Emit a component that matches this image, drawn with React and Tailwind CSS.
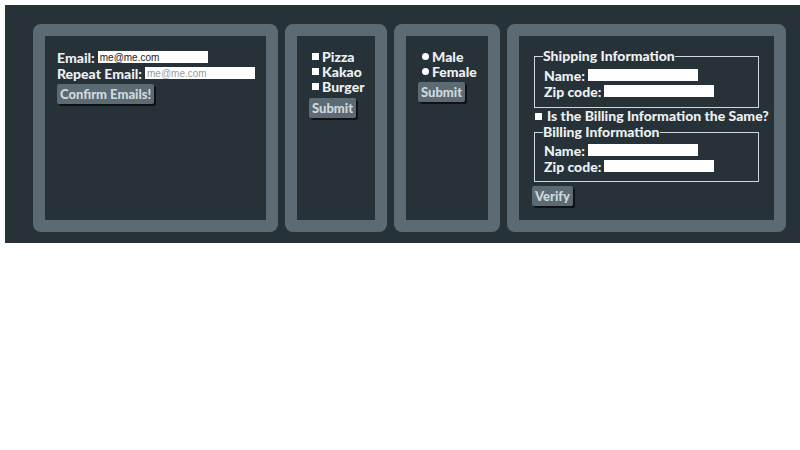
import React from 'react'

const font = { fontFamily: 'Lato, "Noto Sans", sans-serif' }

function Panel({ width, children }) {
  return (
    <div className={`rounded-[8px] border-[12px] border-[#5c6b73] bg-[#263238] h-[208px] ${width}`}>
      {children}
    </div>
  )
}

function Btn({ children }) {
  return (
    <button className="bg-[#5c6b73] text-[#cfd8dc] font-black text-[13px] leading-[20px] px-[3px] rounded-[2px] shadow-[2px_2px_0_#111] whitespace-nowrap">
      {children}
    </button>
  )
}

function Box({ round }) {
  return <span className={`inline-block shrink-0 w-[7px] h-[7px] bg-white mr-[3px] ${round ? 'rounded-full' : ''}`} />
}

function Field({ label, value, placeholder }) {
  return (
    <div className="flex items-center h-[16px] whitespace-nowrap">
      <span className="mr-[3px]">{label}</span>
      <input
        readOnly
        value={value || ''}
        placeholder={placeholder}
        className="w-[110px] h-[12px] bg-white text-[10px] font-normal text-[#222] placeholder-[#999] px-[2px] outline-none"
        style={{ fontFamily: '"Liberation Sans", Arial, sans-serif' }}
      />
    </div>
  )
}

export default function App() {
  return (
    <div className="pl-[5px] pt-[5px]" style={font}>
      <div className="bg-[#263238] h-[238px] flex items-start gap-[7px] pl-[28px] pt-[19px] text-[#eceff1] font-black text-[14px]">
        <Panel width="w-[245px] shrink-0">
          <div className="px-[12px] pt-[13px] flex flex-col items-start">
            <Field label="Email:" value="me@me.com" />
            <Field label="Repeat Email:" placeholder="me@me.com" />
            <div className="mt-[2px]">
              <Btn>Confirm Emails!</Btn>
            </div>
          </div>
        </Panel>
        <Panel width="w-[102px] shrink-0">
          <div className="pl-[15px] pt-[13px] flex flex-col items-start leading-[15px]">
            <label className="flex items-center"><Box />Pizza</label>
            <label className="flex items-center"><Box />Kakao</label>
            <label className="flex items-center"><Box />Burger</label>
            <div className="mt-[4px] -ml-[3px]">
              <Btn>Submit</Btn>
            </div>
          </div>
        </Panel>
        <Panel width="w-[106px] shrink-0">
          <div className="pl-[16px] pt-[13px] flex flex-col items-start leading-[15px]">
            <label className="flex items-center"><Box round />Male</label>
            <label className="flex items-center"><Box round />Female</label>
            <div className="mt-[3px] -ml-[4px]">
              <Btn>Submit</Btn>
            </div>
          </div>
        </Panel>
        <Panel width="w-[279px] shrink-0">
          <div className="pl-[15px] pt-[12px] flex flex-col items-start">
            <fieldset className="w-[225px] border border-[#cfd8dc] pl-[9px] pb-[8px] pt-[3px]">
              <legend className="-ml-[1px] px-0 leading-[16px]">Shipping Information</legend>
              <Field label="Name:" />
              <Field label="Zip code:" />
            </fieldset>
            <label className="flex items-center leading-[16px] ml-[1px] whitespace-nowrap"><Box /><span className="ml-[2px]">Is the Billing Information the Same?</span></label>
            <fieldset className="w-[225px] border border-[#cfd8dc] pl-[9px] pb-[7px] pt-[2px]">
              <legend className="-ml-[1px] px-0 leading-[16px]">Billing Information</legend>
              <Field label="Name:" />
              <Field label="Zip code:" />
            </fieldset>
            <div className="mt-[3px] -ml-[2px]">
              <Btn>Verify</Btn>
            </div>
          </div>
        </Panel>
      </div>
    </div>
  )
}
